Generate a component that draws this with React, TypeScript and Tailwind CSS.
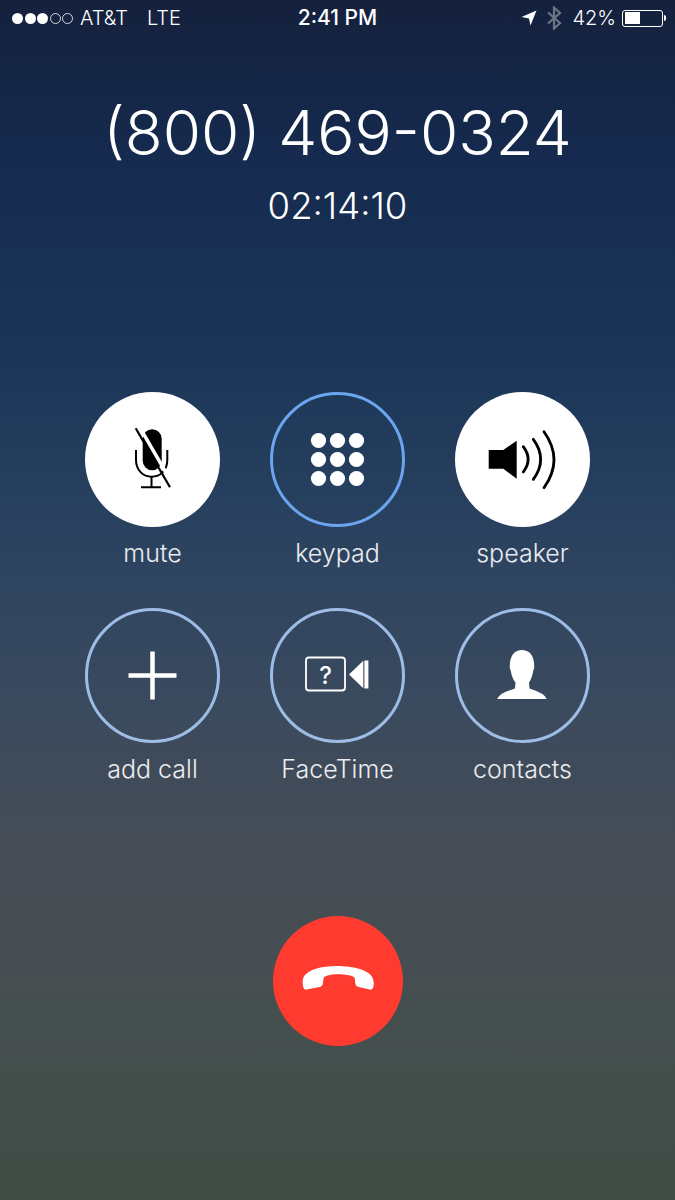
import type { ReactNode } from "react";

function MuteIcon() {
  return (
    <svg viewBox="0 0 135 135" className="h-full w-full">
      <rect x="57.7" y="37.3" width="19" height="41" rx="9.5" fill="#000" />
      <path d="M51 58v10c0 10 7 16.7 15.7 16.7S82.3 78 82.3 68V58" fill="none" stroke="#000" strokeWidth="2" />
      <path d="M66.5 85v10.3M56 95.3h20" fill="none" stroke="#000" strokeWidth="2" />
      <path d="M54.2 34.3 88.4 93.3" stroke="#fff" strokeWidth="3.500" />
      <path d="M50.7 36.3 85 95.3" stroke="#000" strokeWidth="2.200" />
    </svg>
  );
}

function KeypadIcon() {
  const spots = [48.5, 67.5, 86.5];
  return (
    <svg viewBox="0 0 135 135" className="h-full w-full">
      {spots.map((cy) => spots.map((cx) => <circle key={`${cx}-${cy}`} cx={cx} cy={cy} r="7.6" fill="#fff" />))}
    </svg>
  );
}

function SpeakerIcon() {
  return (
    <svg viewBox="0 0 135 135" className="h-full w-full">
      <path d="M33.7 58H48.3L61.7 48.7V86.7L48.3 76.7H33.7Z" fill="#000" />
      <path d="M68.3 54.7Q78 67.4 68.3 80" fill="none" stroke="#000" strokeWidth="2.800" strokeLinecap="round" />
      <path d="M78.3 47.3Q93 67.3 78.3 87.3" fill="none" stroke="#000" strokeWidth="2.800" strokeLinecap="round" />
      <path d="M89 39.7Q109 67.7 89 95.7" fill="none" stroke="#000" strokeWidth="2.800" strokeLinecap="round" />
    </svg>
  );
}

function PlusIcon() {
  return (
    <svg viewBox="0 0 135 135" className="h-full w-full">
      <path d="M43.5 67.5h48M67.5 43.5v48" stroke="#fff" strokeWidth="4.500" />
    </svg>
  );
}

function FaceTimeIcon() {
  return (
    <svg viewBox="0 0 135 135" className="h-full w-full">
      <rect x="36" y="49.5" width="39" height="33" rx="3" fill="none" stroke="#fff" strokeWidth="1.8" />
      <text x="55.5" y="75.500" textAnchor="middle" fill="#fff" fontSize="24" fontWeight="500" fontFamily="Inter, sans-serif">
        ?
      </text>
      <path d="M79 66.5 93.3 52.7V80.3Z" fill="#fff" />
      <rect x="94.4" y="52.5" width="4" height="28" fill="#fff" />
    </svg>
  );
}

function ContactIcon() {
  return (
    <svg viewBox="0 0 135 135" className="h-full w-full">
      <path
        d="M42.3 91C45 85 52 83.500 60 80.500L60.500 74.500C58 72 56.500 67 55.800 63L54.800 60C54.300 47 60 42 67 42C74 42 79.800 47 79.200 60L78.200 63C77.500 67 76 72 74 74.500L74.500 80.500C82 83.500 89 85 91.700 91Z"
        fill="#fff"
      />
    </svg>
  );
}

function HangUpIcon() {
  return (
    <svg viewBox="0 0 130 130" className="h-full w-full">
      <path
        d="M29.700 67.300C29.500 64.500 30 62.500 30.700 60.700C35 54 48 50 64 50C80 50 95 54 99 60.700C100.300 63 100.900 66 100.700 69C100.500 71.500 99.800 73.200 98 73.700L85.700 71C83.500 70.500 82.500 69.500 82.300 67.300L81.700 61.700C79 59.500 73 58.300 64 58.300C58 58.300 53 59.500 50.700 61.700L49.700 68.300C49.300 69.800 48.300 70.700 46.700 71L32.300 73.700C30.500 73 29.800 70 29.700 67.300Z"
        fill="#fff"
      />
    </svg>
  );
}

const BUTTONS: { label: string; active?: boolean; ring?: string; icon: ReactNode }[] = [
  { label: "mute", active: true, icon: <MuteIcon /> },
  { label: "keypad", ring: "border-[#6aa5ee]", icon: <KeypadIcon /> },
  { label: "speaker", active: true, icon: <SpeakerIcon /> },
  { label: "add call", icon: <PlusIcon /> },
  { label: "FaceTime", icon: <FaceTimeIcon /> },
  { label: "contacts", icon: <ContactIcon /> },
];

function StatusBar() {
  return (
    <div className="relative flex h-[36px] items-center justify-between pl-[12px] pr-[9px] text-[20px] text-white">
      <div className="flex items-center">
        <div className="flex items-center gap-[1.5px]">
          <span className="h-[11px] w-[11px] rounded-full bg-white" />
          <span className="h-[11px] w-[11px] rounded-full bg-white" />
          <span className="h-[11px] w-[11px] rounded-full bg-white" />
          <span className="h-[11px] w-[11px] rounded-full border border-white/80" />
          <span className="h-[11px] w-[11px] rounded-full border border-white/80" />
        </div>
        <span className="ml-[7px] font-light">AT&amp;T</span>
        <span className="ml-[19px] font-light">LTE</span>
      </div>
      <span className="absolute left-0 right-0 text-center text-[21px] font-medium">2:41 PM</span>
      <div className="flex items-center">
        <svg viewBox="0 0 16 16" className="h-[16px] w-[16px]">
          <path d="M15.500 0.500 9.500 15.500 8 8.500 0.500 7Z" fill="#fff" />
        </svg>
        <svg viewBox="0 0 16 24" className="ml-[9px] h-[24px] w-[16px]">
          <path d="M2 6.500 14 17 8 22.500V1.500L14 7 2 17.500" fill="none" stroke="#6d7585" strokeWidth="2.200" />
        </svg>
        <span className="ml-[10px] font-light">42%</span>
        <div className="ml-[6px] flex items-center">
          <div className="h-[17px] w-[41px] rounded-[3px] border border-white p-[1.500px]">
            <div className="h-full w-[15px] bg-white" />
          </div>
          <div className="ml-[1px] h-[6px] w-[2px] rounded-r-full bg-white" />
        </div>
      </div>
    </div>
  );
}

export default function App() {
  return (
    <div className="flex h-[1200px] w-[675px] flex-col overflow-hidden bg-[linear-gradient(180deg,#15213d_0px,#152a4e_150px,#1a3558_350px,#2a4260_530px,#3a4a5e_700px,#454c56_850px,#464f50_1000px,#3f4c44_1200px)] font-['Inter',sans-serif] text-white">
      <StatusBar />
      <div className="mt-[61px] text-center text-[62px] leading-[72px] font-light">(800) 469-0324</div>
      <div className="mt-[17px] text-center text-[36.5px] leading-[40px] font-light">02:14:10</div>

      <div className="mt-[166px] grid w-[505px] grid-cols-[135px_135px_135px] justify-between gap-y-[40px] self-center">
        {BUTTONS.map((b) => (
          <div key={b.label} className="flex flex-col items-center">
            <div
              className={
                b.active
                  ? "h-[135px] w-[135px] rounded-full bg-white"
                  : `h-[135px] w-[135px] rounded-full border-[3px] ${b.ring ?? "border-[#9dbde6]"}`
              }
            >
              <div className={b.active ? "h-full w-full" : "-m-[3px] h-[135px] w-[135px]"}>{b.icon}</div>
            </div>
            <span className="mt-[11px] h-[30px] text-[25px] leading-[30px] font-light whitespace-nowrap text-white/90">
              {b.label}
            </span>
          </div>
        ))}
      </div>

      <div className="mt-[132px] h-[130px] w-[130px] self-center rounded-full bg-[#ff3b30]">
        <HangUpIcon />
      </div>
    </div>
  );
}
